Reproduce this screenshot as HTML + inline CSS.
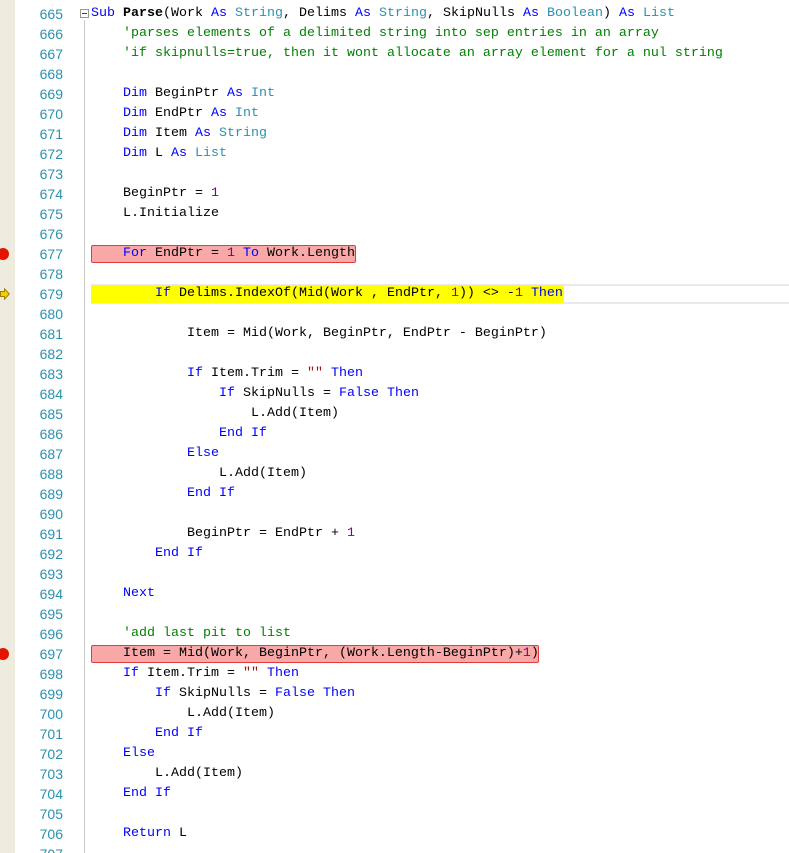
<!DOCTYPE html>
<html><head><meta charset="utf-8"><style>
html,body{margin:0;padding:0;background:#fff;width:789px;height:853px;overflow:hidden;position:relative;font-family:"Liberation Mono",monospace;font-size:13.33px;}
.gut{position:absolute;left:0;top:0;width:15px;height:853px;background:#eeebdf;}
.fold{position:absolute;left:84px;top:20px;width:1px;height:833px;background:#c8c8c8;}
.row{position:absolute;left:0;height:20px;line-height:20px;width:789px;white-space:pre;}
.n{position:absolute;right:726px;color:#2b91af;font-family:"Liberation Sans",sans-serif;font-size:14px;}
.c{position:absolute;left:91px;color:#000;}
.k{color:#0000ff}.t{color:#2b91af}.g{color:#008000}.p{color:#800080}.s{color:#a31515}
.bp{position:absolute;left:91px;height:18px;top:1px;background:#f9a8a8;border:1px solid #e23c3c;border-radius:2px;box-sizing:border-box;}
.dot{position:absolute;left:-3px;top:4px;width:12px;height:12px;border-radius:50%;background:#e51400;}
.cur{position:absolute;left:91px;right:0;top:0;height:20px;border-top:2px solid #eaeaea;border-bottom:2px solid #eaeaea;box-sizing:border-box;}
.yl{position:absolute;left:91px;top:1px;height:18px;width:473px;background:#ffff00;}
.box{position:absolute;left:245px;top:9px;width:9px;height:9px;border:1px solid #999;box-sizing:border-box;background:#fff;}
</style></head><body>
<div class="gut"></div>
<div class="fold"></div>
<div class="row" style="top:4px"><span class="n">665</span><div style="position:absolute;left:80px;top:5px;width:9px;height:9px;border:1px solid #999;box-sizing:border-box;background:#fff"><div style="position:absolute;left:1px;top:3px;width:5px;height:1px;background:#444"></div></div><span class="c"><span class="k">Sub</span> <b>Parse</b>(Work <span class="k">As</span> <span class="t">String</span>, Delims <span class="k">As</span> <span class="t">String</span>, SkipNulls <span class="k">As</span> <span class="t">Boolean</span>) <span class="k">As</span> <span class="t">List</span></span></div>
<div class="row" style="top:24px"><span class="n">666</span><span class="c">    <span class="g">'parses elements of a delimited string into sep entries in an array</span></span></div>
<div class="row" style="top:44px"><span class="n">667</span><span class="c">    <span class="g">'if skipnulls=true, then it wont allocate an array element for a nul string</span></span></div>
<div class="row" style="top:64px"><span class="n">668</span></div>
<div class="row" style="top:84px"><span class="n">669</span><span class="c">    <span class="k">Dim</span> BeginPtr <span class="k">As</span> <span class="t">Int</span></span></div>
<div class="row" style="top:104px"><span class="n">670</span><span class="c">    <span class="k">Dim</span> EndPtr <span class="k">As</span> <span class="t">Int</span></span></div>
<div class="row" style="top:124px"><span class="n">671</span><span class="c">    <span class="k">Dim</span> Item <span class="k">As</span> <span class="t">String</span></span></div>
<div class="row" style="top:144px"><span class="n">672</span><span class="c">    <span class="k">Dim</span> L <span class="k">As</span> <span class="t">List</span></span></div>
<div class="row" style="top:164px"><span class="n">673</span></div>
<div class="row" style="top:184px"><span class="n">674</span><span class="c">    BeginPtr = <span class="p">1</span></span></div>
<div class="row" style="top:204px"><span class="n">675</span><span class="c">    L.Initialize</span></div>
<div class="row" style="top:224px"><span class="n">676</span></div>
<div class="row" style="top:244px"><div class="dot"></div><div class="bp" style="width:265px"></div><span class="n">677</span><span class="c">    <span class="k">For</span> EndPtr = <span class="p">1</span> <span class="k">To</span> Work.Length</span></div>
<div class="row" style="top:264px"><span class="n">678</span></div>
<div class="row" style="top:284px"><div class="cur"></div><div class="yl"></div><svg style="position:absolute;left:0;top:4px" width="10" height="12" viewBox="0 0 10 12"><path d="M0.5 3.5H4.5V0.8L9.3 6L4.5 11.2V8.5H0.5Z" fill="#f5d000" stroke="#a08000" stroke-width="1"/></svg><span class="n">679</span><span class="c">        <span class="k">If</span> Delims.IndexOf(Mid(Work , EndPtr, <span class="p">1</span>)) &lt;&gt; -<span class="p">1</span> <span class="k">Then</span></span></div>
<div class="row" style="top:304px"><span class="n">680</span></div>
<div class="row" style="top:324px"><span class="n">681</span><span class="c">            Item = Mid(Work, BeginPtr, EndPtr - BeginPtr)</span></div>
<div class="row" style="top:344px"><span class="n">682</span></div>
<div class="row" style="top:364px"><span class="n">683</span><span class="c">            <span class="k">If</span> Item.Trim = <span class="s">""</span> <span class="k">Then</span></span></div>
<div class="row" style="top:384px"><span class="n">684</span><span class="c">                <span class="k">If</span> SkipNulls = <span class="k">False</span> <span class="k">Then</span></span></div>
<div class="row" style="top:404px"><span class="n">685</span><span class="c">                    L.Add(Item)</span></div>
<div class="row" style="top:424px"><span class="n">686</span><span class="c">                <span class="k">End If</span></span></div>
<div class="row" style="top:444px"><span class="n">687</span><span class="c">            <span class="k">Else</span></span></div>
<div class="row" style="top:464px"><span class="n">688</span><span class="c">                L.Add(Item)</span></div>
<div class="row" style="top:484px"><span class="n">689</span><span class="c">            <span class="k">End If</span></span></div>
<div class="row" style="top:504px"><span class="n">690</span></div>
<div class="row" style="top:524px"><span class="n">691</span><span class="c">            BeginPtr = EndPtr + <span class="p">1</span></span></div>
<div class="row" style="top:544px"><span class="n">692</span><span class="c">        <span class="k">End If</span></span></div>
<div class="row" style="top:564px"><span class="n">693</span></div>
<div class="row" style="top:584px"><span class="n">694</span><span class="c">    <span class="k">Next</span></span></div>
<div class="row" style="top:604px"><span class="n">695</span></div>
<div class="row" style="top:624px"><span class="n">696</span><span class="c">    <span class="g">'add last pit to list</span></span></div>
<div class="row" style="top:644px"><div class="dot"></div><div class="bp" style="width:448px"></div><span class="n">697</span><span class="c">    Item = Mid(Work, BeginPtr, (Work.Length-BeginPtr)+<span class="p">1</span>)</span></div>
<div class="row" style="top:664px"><span class="n">698</span><span class="c">    <span class="k">If</span> Item.Trim = <span class="s">""</span> <span class="k">Then</span></span></div>
<div class="row" style="top:684px"><span class="n">699</span><span class="c">        <span class="k">If</span> SkipNulls = <span class="k">False</span> <span class="k">Then</span></span></div>
<div class="row" style="top:704px"><span class="n">700</span><span class="c">            L.Add(Item)</span></div>
<div class="row" style="top:724px"><span class="n">701</span><span class="c">        <span class="k">End If</span></span></div>
<div class="row" style="top:744px"><span class="n">702</span><span class="c">    <span class="k">Else</span></span></div>
<div class="row" style="top:764px"><span class="n">703</span><span class="c">        L.Add(Item)</span></div>
<div class="row" style="top:784px"><span class="n">704</span><span class="c">    <span class="k">End If</span></span></div>
<div class="row" style="top:804px"><span class="n">705</span></div>
<div class="row" style="top:824px"><span class="n">706</span><span class="c">    <span class="k">Return</span> L</span></div>
<div class="row" style="top:844px"><span class="n">707</span></div>
</body></html>
